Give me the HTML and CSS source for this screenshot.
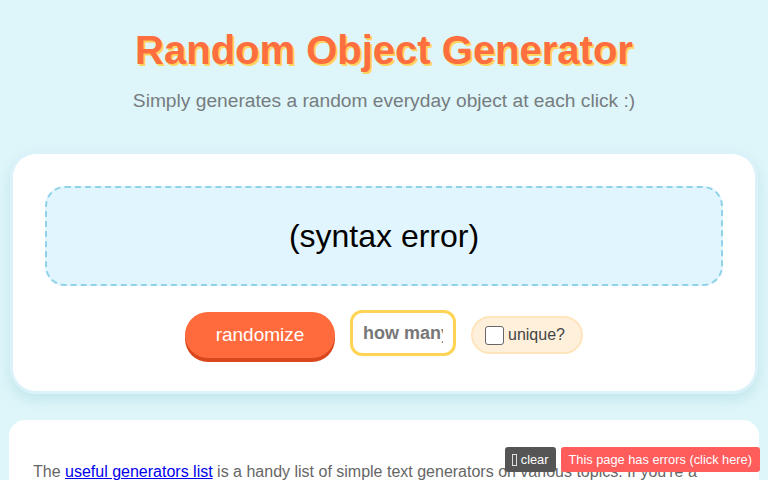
FILE: index.html
```
<!DOCTYPE html>
<html>
<head>
<meta charset="utf-8">
<link rel="stylesheet" href="styles.css">
</head>
<body>
<header class="hero">
  <h1 class="title">Random Object Generator</h1>
  <p class="subtitle">Simply generates a random everyday object at each click :)</p>
</header>
<main class="card">
  <div class="output">(syntax error)</div>
  <div class="controls">
    <button class="btn-random">randomize</button>
    <div class="count"><span class="count-text">how many</span></div>
    <label class="unique"><span class="check"></span>unique?</label>
  </div>
</main>
<section class="info">
  <p class="info-text">The <a href="#" class="link">useful generators list</a> is a handy list of simple text generators on various topics. If you're a</p>
</section>
<div class="errbar">
  <span class="err-clear"><span class="tofu"></span>clear</span>
  <span class="err-msg">This page has errors (click here)</span>
</div>
</body>
</html>
```
FILE: styles.css
```
html, body {
  margin: 0;
  padding: 0;
  overflow: hidden;
}
body {
  background: #def6f9;
  font-family: "Liberation Sans", Arial, sans-serif;
  width: 768px;
  height: 480px;
  position: relative;
}
.hero {
  text-align: center;
  padding-top: 27px;
}
.title {
  margin: 0;
  font-size: 40px;
  font-weight: bold;
  color: #ff6e3e;
  text-shadow: 2px 2px 0 #ffd45e;
  line-height: 46px;
}
.subtitle {
  margin: 16px 0 0 0;
  font-size: 19.2px;
  color: #777c80;
  line-height: 24px;
}
.card {
  margin: 38px 10px 0 10px;
  background: #fff;
  border: 3px solid #dbf2fa;
  border-radius: 26px;
  box-shadow: 0 6px 14px rgba(140, 200, 215, 0.35);
  padding: 32px 32px 31px 32px;
}
.output {
  box-sizing: border-box;
  height: 100px;
  background: #e0f5fd;
  border: 2px dashed #8fd2ea;
  border-radius: 20px;
  display: flex;
  align-items: center;
  justify-content: center;
  font-size: 32px;
  color: #000;
}
.controls {
  display: flex;
  justify-content: center;
  align-items: center;
  gap: 15px;
  margin-top: 24px;
  height: 50px;
}
.btn-random {
  width: 150px;
  height: 46px;
  border: none;
  border-radius: 23px;
  background: #ff6b3d;
  color: #fff;
  font-family: "Liberation Sans", Arial, sans-serif;
  font-size: 19px;
  box-shadow: 0 4px 0 #d9481c;
  margin-top: -1px;
}
.count {
  box-sizing: border-box;
  width: 106px;
  height: 46px;
  border: 3px solid #ffd455;
  border-radius: 12px;
  padding: 0 10px;
  display: flex;
  align-items: center;
  font-size: 18px;
  font-weight: bold;
  color: #777;
  margin-top: -4px;
}
.count-text {
  overflow: hidden;
  white-space: nowrap;
  display: block;
  width: 80px;
}
.unique {
  box-sizing: border-box;
  height: 38px;
  width: 112px;
  background: #fff0dc;
  border: 2px solid #ffe5bd;
  border-radius: 19px;
  display: flex;
  align-items: center;
  padding-left: 12px;
  gap: 4px;
  font-size: 16px;
  color: #444;
}
.check {
  box-sizing: border-box;
  width: 19px;
  height: 19px;
  border: 1.5px solid #666;
  border-radius: 3px;
  background: #fff;
}
.info {
  margin: 26px 9px 0 9px;
  background: #fff;
  border-radius: 16px;
  padding: 40px 24px 20px 24px;
}
.info-text {
  margin: 0;
  font-size: 16px;
  color: #666;
  line-height: 24px;
  white-space: nowrap;
  overflow: hidden;
}
.link {
  color: #0000ee;
  text-decoration: underline;
}
.errbar {
  position: absolute;
  right: 8px;
  top: 447px;
  display: flex;
  gap: 5px;
}
.err-clear, .err-msg {
  height: 25px;
  font-size: 12.8px;
  color: #fff;
  border-radius: 3px;
  padding: 0 8px;
  display: flex;
  align-items: center;
}
.err-clear {
  background: #555;
  padding: 0 7px;
}
.tofu {
  display: inline-block;
  width: 3px;
  height: 10px;
  border: 1px solid #ddd;
  margin-right: 4px;
}
.err-msg {
  background: #ff5c5c;
}
```
